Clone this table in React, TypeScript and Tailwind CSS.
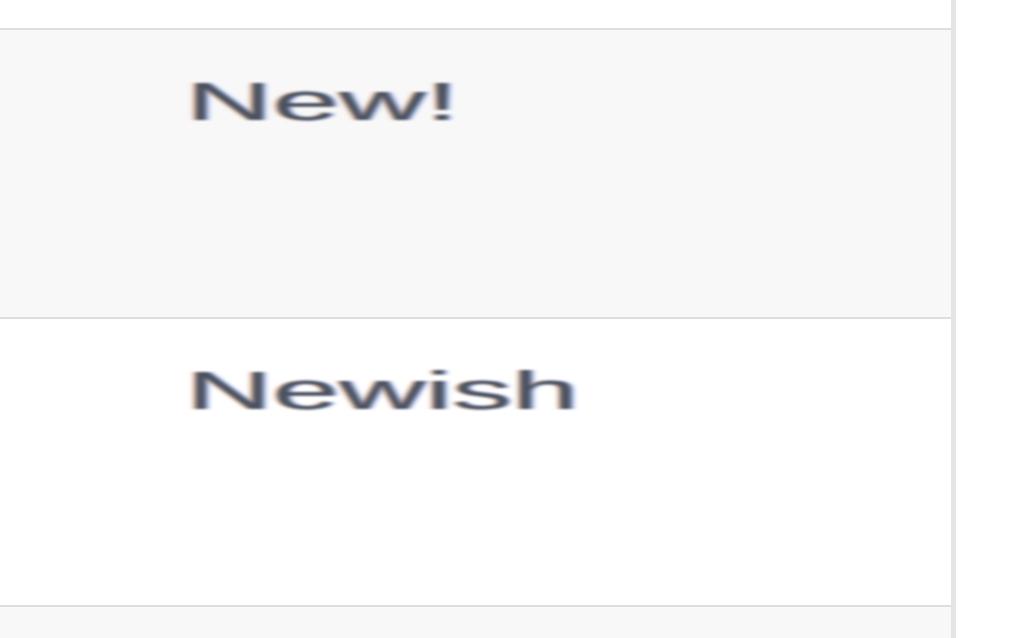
const rows = [
  { label: 'New!', striped: true },
  { label: 'Newish', striped: false },
];

function Cell({ label }: { label: string }) {
  return (
    <div className="pl-[186px] pt-[45px]">
      <span className="inline-block origin-left scale-x-[2.26] text-[53px] leading-none text-[#4a5262] blur-[1.2px] [font-family:'Liberation_Sans',Arial,sans-serif] [text-shadow:-1.5px_0_0_rgba(225,150,90,0.55),1.5px_0_0_rgba(90,130,220,0.5)]">
        {label}
      </span>
    </div>
  );
}

export default function App() {
  return (
    <div className="flex h-[638px] w-[1020px] overflow-hidden bg-white">
      <div className="flex w-[956px] flex-col border-r-[5px] border-[#e4e4e4]">
        <div className="h-[30px] shrink-0 border-b-2 border-[#dedede] bg-white" />
        {rows.map((row) => (
          <div
            key={row.label}
            className={
              row.striped
                ? 'h-[289px] shrink-0 border-b-2 border-[#dedede] bg-[#f8f8f8]'
                : 'h-[288px] shrink-0 border-b-2 border-[#dedede] bg-white'
            }
          >
            <Cell label={row.label} />
          </div>
        ))}
        <div className="flex-1 bg-[#f8f8f8]" />
      </div>
      <div className="flex-1 bg-white" />
    </div>
  );
}
